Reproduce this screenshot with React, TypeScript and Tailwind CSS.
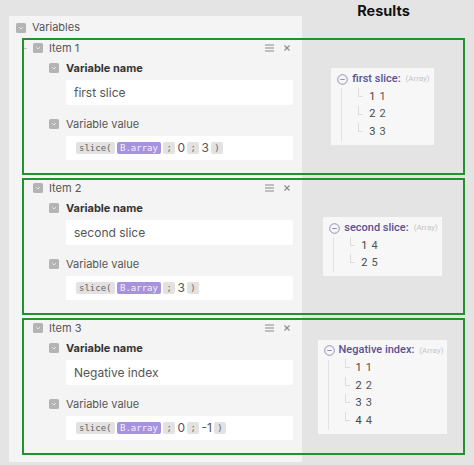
import React from "react";

type Part = { chip?: boolean; tag?: boolean; text: string };

const items: {
  title: string;
  name: string;
  value: Part[];
  result: string[][];
}[] = [
  {
    title: "Item 1",
    name: "first slice",
    value: [
      { chip: true, text: "slice(" },
      { tag: true, text: "B.array" },
      { chip: true, text: ";" },
      { text: "0" },
      { chip: true, text: ";" },
      { text: "3" },
      { chip: true, text: ")" },
    ],
    result: [
      ["1", "1"],
      ["2", "2"],
      ["3", "3"],
    ],
  },
  {
    title: "Item 2",
    name: "second slice",
    value: [
      { chip: true, text: "slice(" },
      { tag: true, text: "B.array" },
      { chip: true, text: ";" },
      { text: "3" },
      { chip: true, text: ")" },
    ],
    result: [
      ["1", "4"],
      ["2", "5"],
    ],
  },
  {
    title: "Item 3",
    name: "Negative index",
    value: [
      { chip: true, text: "slice(" },
      { tag: true, text: "B.array" },
      { chip: true, text: ";" },
      { text: "0" },
      { chip: true, text: ";" },
      { text: "-1" },
      { chip: true, text: ")" },
    ],
    result: [
      ["1", "1"],
      ["2", "2"],
      ["3", "3"],
      ["4", "4"],
    ],
  },
];

function Toggle() {
  return (
    <svg width="10" height="10" viewBox="0 0 10 10" className="shrink-0">
      <rect width="10" height="10" rx="1.5" fill="#b4b4b4" />
      <path d="M3.2 4.3 L5 5.9 L6.8 4.3" stroke="#ececec" strokeWidth="1" fill="none" />
    </svg>
  );
}

function MenuIcon() {
  return (
    <svg width="9" height="8" viewBox="0 0 9 8">
      <path d="M0 1 H9 M0 4 H9 M0 7 H9" stroke="#8a8a8a" strokeWidth="1" />
    </svg>
  );
}

function CloseIcon() {
  return (
    <svg width="6" height="6" viewBox="0 0 6 6">
      <path d="M0.5 0.5 L5.5 5.5 M5.5 0.5 L0.5 5.5" stroke="#8a8a8a" strokeWidth="1.1" />
    </svg>
  );
}

function Collapse() {
  return (
    <svg width="11" height="11" viewBox="0 0 11 11" className="shrink-0">
      <circle cx="5.5" cy="5.5" r="4.8" stroke="#948cbb" strokeWidth="1" fill="none" />
      <path d="M3.2 5.5 H7.8" stroke="#948cbb" strokeWidth="1" />
    </svg>
  );
}

function ValueField({ parts }: { parts: Part[] }) {
  return (
    <div className="ml-[42px] mt-[4px] w-[227px] h-[24px] bg-white rounded-[2px] flex items-center pl-[10px] gap-[2.5px]">
      {parts.map((p, i) =>
        p.tag ? (
          <span
            key={i}
            className="h-[12px] px-[3px] rounded-[2px] bg-[#a792e0] text-[#f4f0ff] text-[9px] leading-[12px] font-['DejaVu_Sans_Mono',monospace]"
          >
            {p.text}
          </span>
        ) : p.chip ? (
          <span
            key={i}
            className="h-[12px] px-[3px] rounded-[2px] bg-[#e2e2e2] text-[#666] text-[9px] leading-[12px] font-['DejaVu_Sans_Mono',monospace]"
          >
            {p.text}
          </span>
        ) : (
          <span key={i} className="text-[12px] text-[#555] leading-none">
            {p.text}
          </span>
        )
      )}
    </div>
  );
}

function ResultCard({ name, rows }: { name: string; rows: string[][] }) {
  return (
    <div className="bg-[#f7f7f7] pl-[6px] pr-[4px] pt-[5px] pb-[4px] font-['Roboto',sans-serif]">
      <div className="flex items-center h-[12px]">
        <Collapse />
        <span className="ml-[4px] text-[11px] font-medium text-[#5a5190]">{name}:</span>
        <span className="ml-[5px] text-[8px] text-[#c4c4c4]">(Array)</span>
      </div>
      <div className="ml-[4px] mt-[3px] border-l border-[#e2e2e2] pl-[16px]">
        {rows.map((r, i) => (
          <div key={i} className="flex items-center h-[17.5px]">
            <div className="w-[5px] h-[9px] -mt-[9px] border-l border-b border-[#dcdcdc]" />
            <span className="ml-[6px] text-[11px] text-[#444]">{r[0]}</span>
            <span className="ml-[4px] text-[11px] text-[#555]">{r[1]}</span>
          </div>
        ))}
      </div>
    </div>
  );
}

export default function App() {
  return (
    <div className="w-[474px] h-[465px] bg-[#e4e4e4] overflow-hidden pt-[16px] pl-[9px] font-['Inter',sans-serif]">
      <div className="w-[456px] h-[446px] bg-[linear-gradient(to_right,#f4f4f4_293px,transparent_293px)] flex flex-col">
        <div className="flex h-[22px]">
          <div className="w-[293px] flex items-center pl-[7px] pt-[1px] gap-[6px]">
            <Toggle />
            <span className="text-[11px] text-[#555]">Variables</span>
          </div>
          <div className="flex-1 flex justify-center -translate-y-[16px]">
            <span className="text-[14.5px] font-bold text-[#111] leading-[22px]">Results</span>
          </div>
        </div>

        <div className="flex flex-col gap-[3px]">
          {items.map((it, idx) => (
            <div key={idx} className="pl-[13px]">
              <div className="w-[443px] h-[137px] border-2 border-[#23912f] flex">
                <div className="w-[278px] bg-[#f4f4f4] flex flex-col">
                  <div className="h-[16px] flex items-center">
                    <span className={`w-[3px] h-px ${idx === 0 ? "bg-[#c4c4c4]" : ""}`} />
                    <span className="ml-[6px] flex">
                      <Toggle />
                    </span>
                    <span className="ml-[6px] text-[11px] text-[#555]">{it.title}</span>
                    <span className="ml-auto flex items-center gap-[10px] pr-[12px]">
                      <MenuIcon />
                      <CloseIcon />
                    </span>
                  </div>
                  <div className="mt-[4px] h-[16px] flex items-center pl-[25px] gap-[7px]">
                    <Toggle />
                    <span className="text-[11px] font-bold text-[#333]">Variable name</span>
                  </div>
                  <div className="ml-[42px] mt-[4px] w-[227px] h-[25px] bg-white rounded-[2px] flex items-center pl-[8px] text-[12px] text-[#555]">
                    {it.name}
                  </div>
                  <div className="mt-[11px] h-[16px] flex items-center pl-[25px] gap-[7px]">
                    <Toggle />
                    <span className="text-[11px] text-[#555]">Variable value</span>
                  </div>
                  <ValueField parts={it.value} />
                </div>
                <div className="flex-1 flex items-center justify-center">
                  <ResultCard name={it.name} rows={it.result} />
                </div>
              </div>
            </div>
          ))}
        </div>
      </div>
    </div>
  );
}
